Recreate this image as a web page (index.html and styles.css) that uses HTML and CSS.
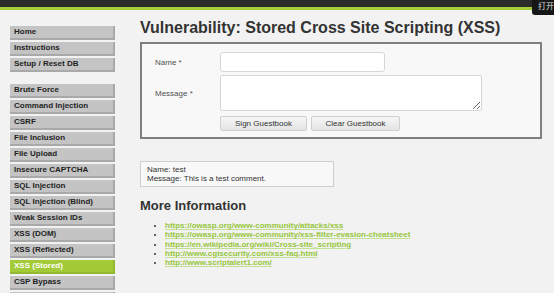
FILE: index.html
```html
<!DOCTYPE html>
<html lang="en">
<head>
<meta charset="utf-8">
<title>DVWA - Stored XSS</title>
<link rel="stylesheet" href="styles.css">
</head>
<body>
<div class="topbar"></div>
<div class="accent"></div>
<div class="corner"><span>打开</span></div>
<div class="layout">
  <nav class="sidebar">
    <ul class="menu">
      <li><a href="#">Home</a></li>
      <li><a href="#">Instructions</a></li>
      <li><a href="#">Setup / Reset DB</a></li>
    </ul>
    <ul class="menu">
      <li><a href="#">Brute Force</a></li>
      <li><a href="#">Command Injection</a></li>
      <li><a href="#">CSRF</a></li>
      <li><a href="#">File Inclusion</a></li>
      <li><a href="#">File Upload</a></li>
      <li><a href="#">Insecure CAPTCHA</a></li>
      <li><a href="#">SQL Injection</a></li>
      <li><a href="#">SQL Injection (Blind)</a></li>
      <li><a href="#">Weak Session IDs</a></li>
      <li><a href="#">XSS (DOM)</a></li>
      <li><a href="#">XSS (Reflected)</a></li>
      <li class="selected"><a href="#">XSS (Stored)</a></li>
      <li><a href="#">CSP Bypass</a></li>
      <li class="sliver" aria-hidden="true"><a href="#">&nbsp;</a></li>
    </ul>
  </nav>
  <main class="content">
    <h1 class="title">Vulnerability: Stored Cross Site Scripting (XSS)</h1>
    <form class="code-area">
      <label class="label" for="name">Name *</label>
      <input class="name-input" id="name" type="text">
      <label class="label" for="msg">Message *</label>
      <textarea class="msg-input" id="msg"></textarea>
      <div class="buttons">
        <button type="button" class="btn btn-sign">Sign Guestbook</button>
        <button type="button" class="btn btn-clear">Clear Guestbook</button>
      </div>
    </form>
    <div class="comment">
      <div>Name: test</div>
      <div>Message: This is a test comment.</div>
    </div>
    <h2 class="more">More Information</h2>
    <ul class="links">
      <li><a href="#">https://owasp.org/www-community/attacks/xss</a></li>
      <li><a href="#">https://owasp.org/www-community/xss-filter-evasion-cheatsheet</a></li>
      <li><a href="#">https://en.wikipedia.org/wiki/Cross-site_scripting</a></li>
      <li><a href="#">http://www.cgisecurity.com/xss-faq.html</a></li>
      <li><a href="#">http://www.scriptalert1.com/</a></li>
    </ul>
  </main>
</div>
</body>
</html>
```
FILE: styles.css
```css
html, body {
  margin: 0;
  padding: 0;
  overflow: hidden;
}
body {
  background: #f2f2f2;
  font-family: "Liberation Sans", Arial, sans-serif;
  font-size: 8px;
  color: #333;
}
.topbar {
  height: 7px;
  background: #2a2a2a;
}
.accent {
  height: 3px;
  background: #a4cb3a;
}
.corner {
  position: absolute;
  top: 0;
  right: 0;
  width: 22px;
  height: 15px;
  background: #161616;
  border-bottom-left-radius: 3px;
  overflow: hidden;
  color: #ddd;
  font-family: "Noto Sans CJK SC", sans-serif;
  font-size: 8px;
  line-height: 9px;
  white-space: nowrap;
}
.corner span {
  display: block;
  padding-left: 6px;
  padding-top: 1px;
}
.layout {
  display: flex;
}
.sidebar {
  width: 140px;
  flex: none;
  padding-top: 16px;
}
.menu {
  list-style: none;
  margin: 0 0 12px 10px;
  padding: 0;
  display: flex;
  flex-direction: column;
  gap: 2px;
}
.menu a {
  display: block;
  width: 99px;
  padding-left: 4px;
  line-height: 12px;
  background: #c4c4c4;
  border-right: 2px solid #a9a9a9;
  border-bottom: 2px solid #a9a9a9;
  color: #1f1f1f;
  font-weight: bold;
  text-decoration: none;
  white-space: nowrap;
}
.menu .selected a {
  background: #a3cb38;
  border-color: #93b833;
  color: #fff;
}
.content {
  flex: 1;
  padding: 9px 12px 0 0;
}
.title {
  margin: 0;
  font-size: 16px;
  line-height: 18px;
  font-weight: bold;
  color: #333;
}
.code-area {
  margin: 5px 0 0 0;
  background: #f8f8f8;
  border: 2px solid #7f7f7f;
  padding: 8px 0 6px 13px;
  display: grid;
  grid-template-columns: 65px auto;
  row-gap: 3px;
  justify-items: start;
}
.label {
  align-self: center;
  color: #505050;
}
.name-input {
  box-sizing: border-box;
  width: 165px;
  height: 20px;
  margin: 0;
  border: 1px solid #d6d6d6;
  border-radius: 3px;
  background: #fff;
}
.msg-input {
  box-sizing: border-box;
  width: 262px;
  height: 36px;
  margin: 0;
  border: 1px solid #d6d6d6;
  border-radius: 2px;
  background: #fff;
  font-size: 8px;
}
.buttons {
  grid-column: 2;
  margin-top: 2px;
  display: flex;
  gap: 4px;
}
.btn {
  height: 15px;
  margin: 0;
  padding: 0;
  border: 1px solid #cfcfcf;
  border-radius: 2px;
  background: linear-gradient(#f6f6f6, #e4e4e4);
  font-family: "Liberation Sans", Arial, sans-serif;
  font-size: 8px;
  color: #333;
}
.btn-sign { width: 87px; }
.btn-clear { width: 89px; }
.comment {
  margin-top: 22px;
  width: 180px;
  padding: 3px 6px 3px 6px;
  line-height: 9px;
  background: #f8f8f8;
  border: 1px solid #cfcfcf;
  color: #333;
}
.more {
  margin: 11px 0 0 0;
  font-size: 13px;
  line-height: 15px;
  font-weight: bold;
  color: #333;
}
.links {
  margin: 8px 0 0 0;
  padding-left: 25px;
  line-height: 9.25px;
}
.links a {
  color: #96c63a;
  font-weight: bold;
  text-decoration: underline;
  text-decoration-color: #c3df93;
}
```
